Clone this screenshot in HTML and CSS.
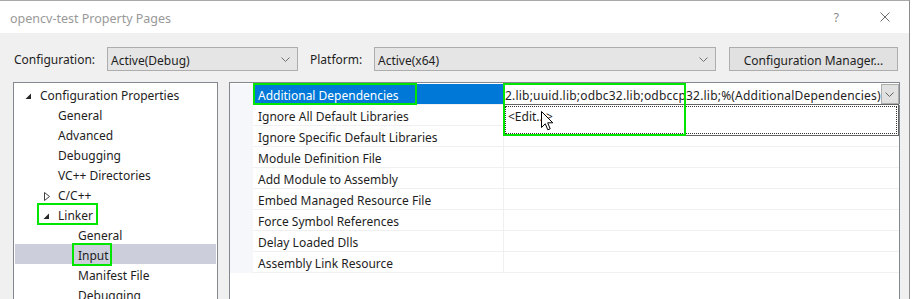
FILE: index.html
```html
<!DOCTYPE html>
<html>
<head>
<meta charset="utf-8">
<link rel="stylesheet" href="styles.css">
</head>
<body>
<div class="screen">
  <div class="window">
    <div class="titlebar">
      <span class="title">opencv-test Property Pages</span>
      <span class="help">?</span>
      <svg class="close" width="10" height="10" viewBox="0 0 10 10"><path d="M0.5 0.5 L9.5 9.5 M9.5 0.5 L0.5 9.5" stroke="#6d6d6d" stroke-width="1" fill="none"/></svg>
    </div>
    <div class="toolbar">
      <span class="lbl lbl-config">Configuration:</span>
      <div class="combo combo-config"><span>Active(Debug)</span><svg class="chev" width="9" height="5" viewBox="0 0 9 5"><path d="M0.5 0.5 L4.5 4.5 L8.5 0.5" stroke="#707070" fill="none"/></svg></div>
      <span class="lbl lbl-platform">Platform:</span>
      <div class="combo combo-platform"><span>Active(x64)</span><svg class="chev" width="9" height="5" viewBox="0 0 9 5"><path d="M0.5 0.5 L4.5 4.5 L8.5 0.5" stroke="#707070" fill="none"/></svg></div>
      <div class="btn"><span>Configuration Manager...</span></div>
    </div>
    <div class="main">
      <div class="tree">
        <div class="titem l1"><svg class="tri" width="7" height="7" viewBox="0 0 7 7"><path d="M6 0.5 L6 6 L0.5 6 Z" fill="#262626"/></svg><span>Configuration Properties</span></div>
        <div class="titem l2"><span>General</span></div>
        <div class="titem l2"><span>Advanced</span></div>
        <div class="titem l2"><span>Debugging</span></div>
        <div class="titem l2"><span>VC++ Directories</span></div>
        <div class="titem l2 has-tri"><svg class="tri tri-c" width="7" height="9" viewBox="0 0 7 9"><path d="M0.5 0.5 L5.5 4.5 L0.5 8.5 Z" fill="none" stroke="#404040"/></svg><span>C/C++</span></div>
        <div class="titem l2 has-tri"><svg class="tri tri-e" width="7" height="7" viewBox="0 0 7 7"><path d="M6 0.5 L6 6 L0.5 6 Z" fill="#262626"/></svg><span>Linker</span></div>
        <div class="titem l3"><span>General</span></div>
        <div class="titem l3 sel"><span>Input</span></div>
        <div class="titem l3"><span>Manifest File</span></div>
        <div class="titem l3"><span>Debugging</span></div>
      </div>
      <div class="grid">
        <div class="prow psel"><div class="gut"></div><div class="pname">Additional Dependencies</div><div class="pval"><span class="vtext">2.lib;uuid.lib;odbc32.lib;odbccp32.lib;%(AdditionalDependencies)</span><div class="ddbtn"><svg width="9" height="5" viewBox="0 0 9 5"><path d="M0.5 0.5 L4.5 4.5 L8.5 0.5" stroke="#606060" fill="none"/></svg></div></div></div>
        <div class="prow"><div class="gut"></div><div class="pname">Ignore All Default Libraries</div><div class="pval"></div></div>
        <div class="prow"><div class="gut"></div><div class="pname">Ignore Specific Default Libraries</div><div class="pval"></div></div>
        <div class="prow"><div class="gut"></div><div class="pname">Module Definition File</div><div class="pval"></div></div>
        <div class="prow"><div class="gut"></div><div class="pname">Add Module to Assembly</div><div class="pval"></div></div>
        <div class="prow"><div class="gut"></div><div class="pname">Embed Managed Resource File</div><div class="pval"></div></div>
        <div class="prow"><div class="gut"></div><div class="pname">Force Symbol References</div><div class="pval"></div></div>
        <div class="prow"><div class="gut"></div><div class="pname">Delay Loaded Dlls</div><div class="pval"></div></div>
        <div class="prow"><div class="gut"></div><div class="pname">Assembly Link Resource</div><div class="pval"></div></div>
      </div>
    </div>
  </div>

  <div class="popup"><div class="focus"><span>&lt;Edit...&gt;</span></div></div>
  <svg class="cursor" width="13" height="21" viewBox="0 0 13 21"><path d="M0.5 0.5 L0.5 16.5 L4.3 12.8 L6.8 18.8 L9.2 17.8 L6.7 11.8 L11.8 11.8 Z" fill="#fff" stroke="#000" stroke-width="1" stroke-linejoin="miter"/></svg>

  <div class="hl hl-linker"></div>
  <div class="hl hl-input"></div>
  <div class="hl hl-addl"></div>
  <div class="hl hl-value"></div>
</div>
</body>
</html>
```

FILE: styles.css
```css
* { box-sizing: border-box; }
html, body { margin: 0; padding: 0; }
body {
  width: 912px;
  height: 299px;
  overflow: hidden;
  background: #ffffff;
  font-family: "Noto Sans", "Open Sans", sans-serif;
  font-size: 12px;
  color: #1e1e1e;
}
.screen {
  position: relative;
  width: 912px;
  height: 299px;
}
.window {
  width: 910px;
  height: 299px;
  background: #f0f0f0;
  border-top: 1px solid #a8a8a8;
  border-right: 1px solid #8c8c8c;
  overflow: hidden;
}
.titlebar {
  height: 32px;
  background: #ffffff;
  display: flex;
  align-items: center;
  padding-left: 10px;
}
.title {
  color: #999999;
  font-size: 12.5px;
  flex: 1;
  padding-top: 2px;
}
.help {
  color: #888888;
  font-size: 12px;
  margin-right: 41px;
  padding-top: 1px;
}
.close {
  margin-right: 19px;
}
.toolbar {
  display: flex;
  align-items: center;
  padding: 14px 0 0 14px;
  height: 38px;
}
.lbl {
  line-height: 22px;
  height: 24px;
  padding-top: 2px;
}
.lbl-config { width: 93px; }
.lbl-platform { width: 64px; margin-left: 12px; }
.combo {
  height: 24px;
  background: #e5e5e5;
  border: 1px solid #adadad;
  display: flex;
  align-items: center;
  padding-left: 3px;
  padding-right: 7px;
}
.combo span { flex: 1; padding-top: 2px; }
.combo-config { width: 191px; }
.combo-platform { width: 342px; }
.chev { display: block; }
.btn {
  margin-left: 13px;
  width: 169px;
  height: 24px;
  background: #e1e1e1;
  border: 1px solid #adadad;
  display: flex;
  align-items: center;
  justify-content: center;
}
.btn span { padding-top: 2px; }
.main {
  display: flex;
  align-items: flex-start;
  padding: 11px 0 0 13px;
  gap: 11px;
}
.tree {
  width: 205px;
  height: 240px;
  background: #ffffff;
  border: 1px solid #828790;
  padding: 1px 1px 0 1px;
}
.titem {
  height: 20px;
  padding-top: 4px;
  display: flex;
  align-items: center;
}
.titem span { line-height: 16px; }
.l1 { padding-left: 10px; }
.l1 .tri { margin-right: 8px; }
.l2 { padding-left: 43px; }
.l2.has-tri { padding-left: 28px; }
.l2 .tri-c { margin-right: 7px; margin-left: 1px; }
.l2 .tri-e { margin-right: 8px; }
.l3 { padding-left: 63px; }
.sel { background: #cccedb; }
.grid {
  width: 671px;
  height: 240px;
  background: #ffffff;
  border: 1px solid #828790;
  padding-top: 1px;
}
.prow {
  display: grid;
  grid-template-columns: 23px 251px 1fr;
  height: 21px;
}
.gut { background: #f5f7fb; }
.pname {
  padding-left: 5px;
  padding-top: 4px;
  line-height: 16px;
  border-bottom: 1px solid #f0f0f3;
  border-right: 1px solid #f0f0f3;
  white-space: nowrap;
}
.pval {
  border-bottom: 1px solid #f0f0f3;
  display: flex;
  align-items: center;
}
.psel .pname {
  background: #0078d7;
  color: #ffffff;
}
.vtext {
  padding-left: 1px;
  padding-top: 3px;
  line-height: 17px;
  letter-spacing: 0.2px;
  white-space: nowrap;
  flex: 1;
  overflow: hidden;
  color: #1e1e1e;
}
.ddbtn {
  width: 18px;
  height: 20px;
  background: #e1e1e1;
  border: 1px solid #adadad;
  display: flex;
  align-items: center;
  justify-content: center;
  margin-right: 1px;
}
.ddbtn svg { display: block; }
.popup {
  position: absolute;
  left: 503px;
  top: 104px;
  width: 396px;
  height: 32px;
  background: #ffffff;
  border: 1px solid #646464;
  padding: 1px;
}
.focus {
  height: 100%;
  border: 1px dotted #333333;
  padding-left: 2px;
  padding-top: 2px;
}
.focus span { line-height: 16px; display: block; }
.cursor {
  position: absolute;
  left: 541px;
  top: 111px;
}
.hl {
  position: absolute;
  border: 2px solid #00e600;
}
.hl-linker { left: 37px; top: 203px; width: 61px; height: 22px; }
.hl-input { left: 72px; top: 243px; width: 40px; height: 23px; }
.hl-addl { left: 253px; top: 83px; width: 164px; height: 22px; }
.hl-value { left: 503px; top: 83px; width: 183px; height: 53px; }
```
